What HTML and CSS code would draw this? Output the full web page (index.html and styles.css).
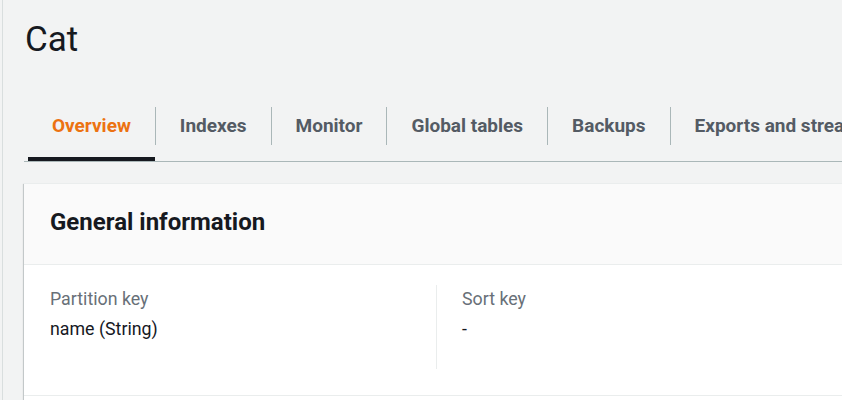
FILE: index.html
```html
<!DOCTYPE html>
<html lang="en">
<head>
<meta charset="utf-8">
<title>Cat</title>
<link rel="stylesheet" href="styles.css">
</head>
<body>
<div class="frame">
  <main class="content">
    <h1 class="title">Cat</h1>
    <nav class="tabs">
      <a class="tab active"><span class="tab-label">Overview</span></a>
      <a class="tab"><span class="tab-label">Indexes</span></a>
      <a class="tab"><span class="tab-label">Monitor</span></a>
      <a class="tab"><span class="tab-label">Global tables</span></a>
      <a class="tab"><span class="tab-label">Backups</span></a>
      <a class="tab"><span class="tab-label">Exports and streams</span></a>
    </nav>
    <section class="card">
      <header class="card-header">
        <h2 class="card-title">General information</h2>
      </header>
      <div class="card-body">
        <div class="kv-col">
          <div class="kv-label">Partition key</div>
          <div class="kv-value">name (String)</div>
        </div>
        <div class="kv-col divided">
          <div class="kv-label">Sort key</div>
          <div class="kv-value">-</div>
        </div>
      </div>
      <div class="card-more"></div>
    </section>
  </main>
</div>
</body>
</html>
```
FILE: styles.css
```css
html, body {
  margin: 0;
  padding: 0;
  overflow: hidden;
  background: #f2f3f3;
}
body {
  font-family: Roboto, "Liberation Sans", Arial, sans-serif;
  color: #16191f;
}
.frame {
  margin-left: 2px;
  border-left: 1px solid #d9dede;
  min-height: 400px;
}
.content {
  width: 1400px;
  padding-left: 21px;
}
.title {
  margin: 0;
  padding-top: 19px;
  padding-left: 1px;
  font-size: 35px;
  line-height: 42px;
  font-weight: 400;
  color: #16191f;
}
.tabs {
  display: flex;
  margin-top: 46px;
  padding-left: 4px;
  border-bottom: 1px solid #aab7b8;
}
.tab {
  display: block;
  padding-bottom: 16px;
  font-size: 19px;
  font-weight: 700;
  color: #545b64;
  white-space: nowrap;
}
.tab + .tab .tab-label {
  border-left: 1px solid #aab7b8;
}
.tab-label {
  display: block;
  line-height: 38px;
  padding: 0 24px;
}
.tab.active {
  color: #ec7211;
  box-shadow: inset 0 -4px 0 #16191f;
}
.card {
  margin-top: 21px;
  background: #ffffff;
  border-top: 1px solid #eaeded;
  box-shadow: 0 1px 1px 0 rgba(0, 28, 36, 0.3), 1px 1px 1px 0 rgba(0, 28, 36, 0.15), -1px 1px 1px 0 rgba(0, 28, 36, 0.15);
}
.card-header {
  background: #fafafa;
  border-bottom: 1px solid #eaeded;
  padding: 23px 26px 27px;
}
.card-title {
  margin: 0;
  font-size: 24px;
  line-height: 30px;
  font-weight: 700;
  color: #16191f;
}
.card-body {
  display: grid;
  grid-template-columns: 386px 386px;
  padding: 20px 26px 26px;
  border-bottom: 1px solid #eaeded;
}
.kv-col {
  padding-bottom: 26px;
}
.kv-col.divided {
  border-left: 1px solid #eaeded;
  padding-left: 25px;
}
.kv-label {
  font-size: 17.8px;
  line-height: 28px;
  color: #687078;
}
.kv-value {
  margin-top: 2px;
  font-size: 17.8px;
  line-height: 28px;
  color: #16191f;
}
.card-more {
  height: 60px;
}
```
